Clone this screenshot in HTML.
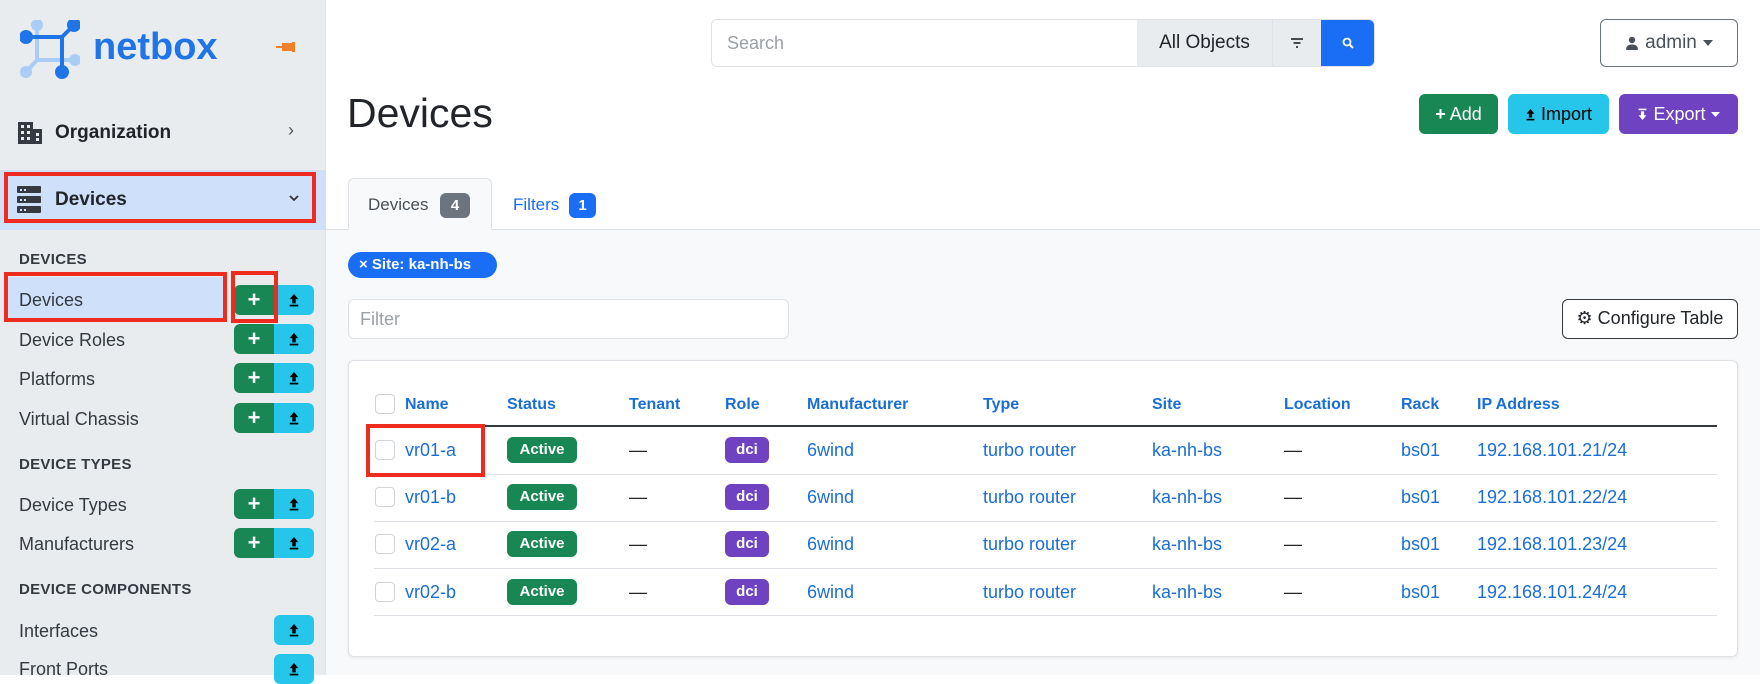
<!DOCTYPE html>
<html><head><meta charset="utf-8"><style>
*{box-sizing:border-box;margin:0;padding:0}
body{width:1760px;height:675px;overflow:hidden;background:#fff;font-family:"Liberation Sans",sans-serif;color:#212529;position:relative}
.a{position:absolute}
.sb{left:0;top:0;width:326px;height:675px;background:#e9ecef;border-right:1px solid #dee2e6}
.it{position:absolute;left:19px;font-size:18px;color:#343a40}
.hd{position:absolute;left:19px;font-size:15px;font-weight:bold;color:#343a40;letter-spacing:.3px}
.bg{position:absolute;height:30px;border-radius:6px;overflow:hidden;display:flex}
.bg span{display:flex;align-items:center;justify-content:center;width:40px;height:30px;font-weight:bold;font-size:22px}
.g{background:#198754;color:#fff}.c{background:#25c6ea;color:#000}
.red{position:absolute;border:4px solid #ee2b1f}
.th{position:absolute;top:396px;font-size:16px;font-weight:bold;color:#1a6ed6}
.td{position:absolute;font-size:18px;color:#1a6ed6}
.dash{position:absolute;left:629px;font-size:18px;color:#212529}
.act{position:absolute;left:507px;width:70px;height:26px;background:#198754;color:#fff;font-weight:bold;font-size:15px;border-radius:6px;text-align:center;line-height:26px}
.dci{position:absolute;left:725px;width:44px;height:26px;background:#6f42c1;color:#fff;font-weight:bold;font-size:15px;border-radius:6px;text-align:center;line-height:26px}
.cb{position:absolute;left:375px;width:20px;height:20px;border:1px solid #ced4da;border-radius:4px;background:#fff}
.line{position:absolute;left:374px;width:1343px;height:1px;background:#dee2e6}
</style></head><body>
<svg width="0" height="0" style="position:absolute"><defs><symbol id="up" viewBox="0 0 14 16"><path d="M7 1 L12 7 H9 V12 H5 V7 H2 Z" fill="currentColor"/><rect x="2" y="13.5" width="10" height="2" fill="currentColor"/></symbol></defs></svg>
<div class="a sb"></div>
<svg class="a" style="left:20px;top:20px" width="60" height="60" viewBox="0 0 60 60">
<g stroke="#a9cdf5" stroke-width="4" fill="#a9cdf5"><line x1="17" y1="5" x2="17" y2="40"/><line x1="17" y1="40" x2="55" y2="40"/><line x1="17" y1="40" x2="6" y2="52"/><circle cx="17" cy="5" r="4"/><circle cx="55" cy="40" r="4"/><circle cx="6" cy="52" r="4"/></g>
<g stroke="#1f75e8" stroke-width="4" fill="#1f75e8"><line x1="6" y1="17" x2="42" y2="17"/><line x1="42" y1="17" x2="42" y2="52"/><line x1="42" y1="17" x2="54" y2="5"/><circle cx="6" cy="17" r="5"/><circle cx="54" cy="5" r="5"/><circle cx="42" cy="52" r="5"/></g></svg>
<div class="a" style="left:93px;top:26px;font-size:38px;font-weight:bold;color:#1f75e8">netbox</div>
<svg class="a" style="left:276px;top:42px" width="20" height="10"><rect x="0" y="4" width="6" height="2" fill="#f07f2a"/><rect x="6" y="1" width="11" height="8" fill="#f07f2a"/><rect x="16" y="0" width="3" height="10" fill="#f07f2a"/></svg>
<svg class="a" style="left:17px;top:121px" width="26" height="24"><rect x="1" y="1" width="15" height="22" fill="#343a40"/><rect x="16" y="8" width="9" height="15" fill="#343a40"/><g fill="#e9ecef"><rect x="4" y="4" width="3" height="3"/><rect x="10" y="4" width="3" height="3"/><rect x="4" y="10" width="3" height="3"/><rect x="10" y="10" width="3" height="3"/><rect x="4" y="16" width="3" height="3"/><rect x="10" y="16" width="3" height="3"/><rect x="19" y="12" width="3" height="3"/><rect x="19" y="17" width="3" height="3"/></g></svg>
<div class="a" style="left:55px;top:122px;font-size:19px;font-weight:bold;color:#212529">Organization</div>
<div class="a" style="left:288px;top:120px;font-size:18px;color:#555">›</div>
<div class="a" style="left:0;top:170px;width:326px;height:60px;background:#cfe0fb"></div>
<svg class="a" style="left:17px;top:186px" width="24" height="27"><g fill="#343a40"><rect x="0" y="0" width="24" height="7" rx="1"/><rect x="0" y="10" width="24" height="7" rx="1"/><rect x="0" y="20" width="24" height="7" rx="1"/></g><g fill="#cfe0fb"><rect x="3" y="3" width="2" height="2"/><rect x="7" y="3" width="2" height="2"/><rect x="3" y="13" width="2" height="2"/><rect x="7" y="13" width="2" height="2"/><rect x="3" y="23" width="2" height="2"/><rect x="7" y="23" width="2" height="2"/></g></svg>
<div class="a" style="left:55px;top:189px;font-size:19px;font-weight:bold;color:#212529">Devices</div>
<svg class="a" style="left:289px;top:195px" width="10" height="7"><path d="M1 1 L5 5 L9 1" stroke="#333" stroke-width="1.8" fill="none"/></svg>
<div class="red" style="left:4px;top:172px;width:312px;height:51px"></div>
<div class="hd" style="top:251px">DEVICES</div>
<div class="a" style="left:6px;top:277px;width:219px;height:43px;background:#cfe0fb"></div>
<div class="it" style="top:290px">Devices</div>
<div class="red" style="left:4px;top:272px;width:223px;height:50px"></div>
<div class="it" style="top:330px">Device Roles</div>
<div class="it" style="top:369px">Platforms</div>
<div class="it" style="top:409px">Virtual Chassis</div>
<div class="hd" style="top:456px">DEVICE TYPES</div>
<div class="it" style="top:495px">Device Types</div>
<div class="it" style="top:534px">Manufacturers</div>
<div class="hd" style="top:581px">DEVICE COMPONENTS</div>
<div class="it" style="top:621px">Interfaces</div>
<div class="it" style="top:659px">Front Ports</div>
<div class="bg" style="left:234px;top:285px"><span class="g">+</span><span class="c"><svg width="12" height="14"><use href="#up"/></svg></span></div>
<div class="bg" style="left:234px;top:324px"><span class="g">+</span><span class="c"><svg width="12" height="14"><use href="#up"/></svg></span></div>
<div class="bg" style="left:234px;top:363px"><span class="g">+</span><span class="c"><svg width="12" height="14"><use href="#up"/></svg></span></div>
<div class="bg" style="left:234px;top:403px"><span class="g">+</span><span class="c"><svg width="12" height="14"><use href="#up"/></svg></span></div>
<div class="bg" style="left:234px;top:489px"><span class="g">+</span><span class="c"><svg width="12" height="14"><use href="#up"/></svg></span></div>
<div class="bg" style="left:234px;top:528px"><span class="g">+</span><span class="c"><svg width="12" height="14"><use href="#up"/></svg></span></div>
<div class="bg" style="left:274px;top:615px"><span class="c"><svg width="12" height="14"><use href="#up"/></svg></span></div>
<div class="bg" style="left:274px;top:654px"><span class="c"><svg width="12" height="14"><use href="#up"/></svg></span></div>
<div class="red" style="left:231px;top:271px;width:47px;height:52px"></div>

<div class="a" style="left:711px;top:19px;width:664px;height:48px;border:1px solid #dee2e6;border-radius:6px;overflow:hidden;display:flex">
<div style="width:425px;padding-left:15px;line-height:46px;color:#9aa0a6;font-size:18px">Search</div>
<div style="width:135px;background:#e9ecef;line-height:46px;text-align:center;font-size:19px;color:#212529">All Objects</div>
<div style="width:49px;background:#e9ecef;border-left:1px solid #dee2e6;display:flex;align-items:center;justify-content:center"><svg width="14" height="12"><path d="M1 2H13M3.5 6H10.5M6 10H8" stroke="#333" stroke-width="1.8"/></svg></div>
<div style="flex:1;background:#1a6ef5;display:flex;align-items:center;justify-content:center"><svg width="12" height="12"><circle cx="5" cy="5" r="3.5" stroke="#fff" stroke-width="1.8" fill="none"/><path d="M7.5 7.5 L11 11" stroke="#fff" stroke-width="2"/></svg></div></div>
<div class="a" style="left:1600px;top:19px;width:138px;height:48px;border:1px solid #6c757d;border-radius:6px;font-size:19px;color:#495057;line-height:46px;display:flex;align-items:center;justify-content:center;gap:6px"><svg width="14" height="14"><circle cx="7" cy="4" r="3.2" fill="#495057"/><path d="M1 14 Q1 8.5 7 8.5 Q13 8.5 13 14Z" fill="#495057"/></svg>admin<svg width="10" height="6"><path d="M0 0H10L5 6Z" fill="#495057"/></svg></div>
<div class="a" style="left:347px;top:90px;font-size:41px;color:#212529">Devices</div>
<div class="a" style="left:1419px;top:94px;width:79px;height:40px;background:#198754;color:#fff;border-radius:6px;font-size:18px;line-height:40px;text-align:center"><b>+</b> Add</div>
<div class="a" style="left:1508px;top:94px;width:101px;height:40px;background:#25c6ea;color:#000;border-radius:6px;font-size:18px;line-height:40px;text-align:center"><svg width="11" height="13" style="vertical-align:-1px"><use href="#up"/></svg> Import</div>
<div class="a" style="left:1619px;top:94px;width:119px;height:40px;background:#6f42c1;color:#fff;border-radius:6px;font-size:18px;line-height:40px;text-align:center"><svg width="11" height="13" style="vertical-align:-1px;transform:scaleY(-1)"><use href="#up"/></svg> Export <svg width="9" height="5" style="vertical-align:3px"><path d="M0 0H9L4.5 5Z" fill="#fff"/></svg></div>

<div class="a" style="left:326px;top:229px;width:1434px;height:446px;background:#f8f9fa;border-top:1px solid #dee2e6"></div>
<div class="a" style="left:348px;top:178px;width:144px;height:52px;background:#f8f9fa;border:1px solid #dee2e6;border-bottom:none;border-radius:6px 6px 0 0"></div>
<div class="a" style="left:368px;top:195px;font-size:17px;color:#495057">Devices</div>
<div class="a" style="left:440px;top:193px;width:30px;height:25px;background:#6c757d;color:#fff;border-radius:6px;font-size:15px;font-weight:bold;text-align:center;line-height:25px">4</div>
<div class="a" style="left:513px;top:195px;font-size:17px;color:#1a6ef5">Filters</div>
<div class="a" style="left:569px;top:193px;width:27px;height:25px;background:#1a6ef5;color:#fff;border-radius:6px;font-size:15px;font-weight:bold;text-align:center;line-height:25px">1</div>
<div class="a" style="left:348px;top:252px;width:149px;height:26px;background:#1a6ef5;color:#fff;border-radius:13px;font-size:15px;font-weight:bold;line-height:26px;padding-left:11px">× Site: ka-nh-bs</div>
<div class="a" style="left:348px;top:299px;width:441px;height:40px;background:#fff;border:1px solid #dee2e6;border-radius:6px;font-size:18px;color:#9aa0a6;line-height:38px;padding-left:11px">Filter</div>
<div class="a" style="left:1562px;top:299px;width:176px;height:40px;background:#fff;border:1.5px solid #343a40;border-radius:6px;font-size:18px;color:#212529;line-height:37px;text-align:center">⚙ Configure Table</div>

<div class="a" style="left:348px;top:360px;width:1390px;height:297px;background:#fff;border:1px solid #dee2e6;border-radius:6px;box-shadow:0 1px 3px rgba(0,0,0,.08)"></div>
<div class="cb" style="top:394px"></div>
<div class="th" style="left:405px">Name</div><div class="th" style="left:507px">Status</div><div class="th" style="left:629px">Tenant</div><div class="th" style="left:725px">Role</div><div class="th" style="left:807px">Manufacturer</div><div class="th" style="left:983px">Type</div><div class="th" style="left:1152px">Site</div><div class="th" style="left:1284px">Location</div><div class="th" style="left:1401px">Rack</div><div class="th" style="left:1477px">IP Address</div>
<div class="a" style="left:374px;top:425px;width:1343px;height:2px;background:#343a40"></div>

<div class="cb" style="top:440px"></div><div class="td" style="left:405px;top:440px">vr01-a</div><div class="act" style="top:437px">Active</div><div class="dash" style="top:440px">—</div><div class="dci" style="top:437px">dci</div><div class="td" style="left:807px;top:440px">6wind</div><div class="td" style="left:983px;top:440px">turbo router</div><div class="td" style="left:1152px;top:440px">ka-nh-bs</div><div class="dash" style="left:1284px;top:440px">—</div><div class="td" style="left:1401px;top:440px">bs01</div><div class="td" style="left:1477px;top:440px">192.168.101.21/24</div>
<div class="line" style="top:474px"></div>
<div class="cb" style="top:487px"></div><div class="td" style="left:405px;top:487px">vr01-b</div><div class="act" style="top:484px">Active</div><div class="dash" style="top:487px">—</div><div class="dci" style="top:484px">dci</div><div class="td" style="left:807px;top:487px">6wind</div><div class="td" style="left:983px;top:487px">turbo router</div><div class="td" style="left:1152px;top:487px">ka-nh-bs</div><div class="dash" style="left:1284px;top:487px">—</div><div class="td" style="left:1401px;top:487px">bs01</div><div class="td" style="left:1477px;top:487px">192.168.101.22/24</div>
<div class="line" style="top:521px"></div>
<div class="cb" style="top:534px"></div><div class="td" style="left:405px;top:534px">vr02-a</div><div class="act" style="top:531px">Active</div><div class="dash" style="top:534px">—</div><div class="dci" style="top:531px">dci</div><div class="td" style="left:807px;top:534px">6wind</div><div class="td" style="left:983px;top:534px">turbo router</div><div class="td" style="left:1152px;top:534px">ka-nh-bs</div><div class="dash" style="left:1284px;top:534px">—</div><div class="td" style="left:1401px;top:534px">bs01</div><div class="td" style="left:1477px;top:534px">192.168.101.23/24</div>
<div class="line" style="top:568px"></div>
<div class="cb" style="top:582px"></div><div class="td" style="left:405px;top:582px">vr02-b</div><div class="act" style="top:579px">Active</div><div class="dash" style="top:582px">—</div><div class="dci" style="top:579px">dci</div><div class="td" style="left:807px;top:582px">6wind</div><div class="td" style="left:983px;top:582px">turbo router</div><div class="td" style="left:1152px;top:582px">ka-nh-bs</div><div class="dash" style="left:1284px;top:582px">—</div><div class="td" style="left:1401px;top:582px">bs01</div><div class="td" style="left:1477px;top:582px">192.168.101.24/24</div>
<div class="line" style="top:615px"></div>
<div class="red" style="left:366px;top:424px;width:119px;height:53px"></div>
</body></html>
